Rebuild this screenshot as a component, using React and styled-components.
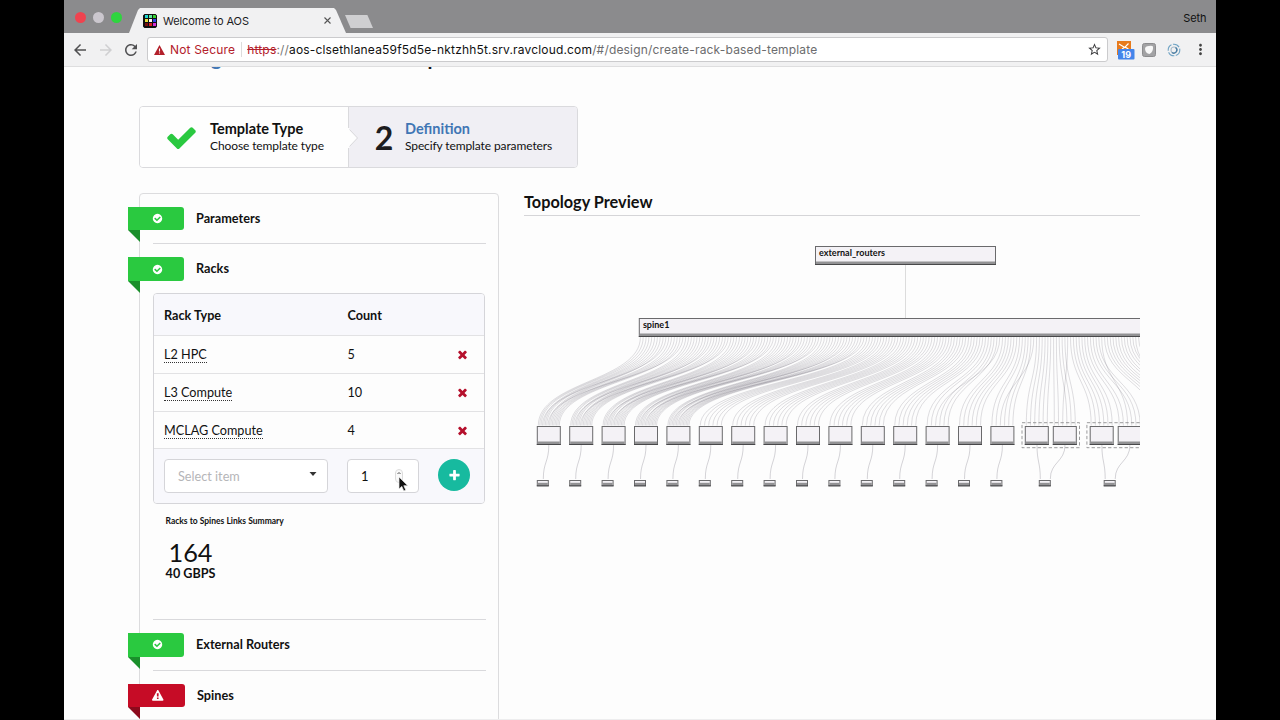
import React from 'react';
import styled, { createGlobalStyle } from 'styled-components';
import { MdArrowBack, MdArrowForward, MdRefresh, MdStarBorder, MdMoreVert } from 'react-icons/md';

const GlobalStyle = createGlobalStyle`
  * { box-sizing: border-box; }
  body {
    margin: 0;
    background: #000;
    color: #111;
    font-family: Lato, "Liberation Sans", sans-serif;
    font-size: 13px;
    overflow: hidden;
  }
`;

const ICONS = {
    check: 'M1671 566q0 40-28 68l-724 724-136 136q-28 28-68 28t-68-28l-136-136-362-362q-28-28-28-68t28-68l136-136q28-28 68-28t68 28l294 295 656-657q28-28 68-28t68 28l136 136q28 28 28 68z',
    remove: 'M1490 1322q0 40-28 68l-136 136q-28 28-68 28t-68-28l-294-294-294 294q-28 28-68 28t-68-28l-136-136q-28-28-28-68t28-68l294-294-294-294q-28-28-28-68t28-68l136-136q28-28 68-28t68 28l294 294 294-294q28-28 68-28t68 28l136 136q28 28 28 68t-28 68l-294 294 294 294q28 28 28 68z',
    plus: 'M1600 736v192q0 40-28 68t-68 28h-416v416q0 40-28 68t-68 28h-192q-40 0-68-28t-28-68v-416h-416q-40 0-68-28t-28-68v-192q0-40 28-68t68-28h416v-416q0-40 28-68t68-28h192q40 0 68 28t28 68v416h416q40 0 68 28t28 68z',
    ok: 'M1412 734q0-28-18-46l-91-90q-19-19-45-19t-45 19l-408 407-226-226q-19-19-45-19t-45 19l-91 90q-18 18-18 46 0 27 18 45l362 362q19 19 45 19 27 0 46-19l543-543q18-18 18-45zm252 162q0 209-103 385.5t-279.5 279.5-385.5 103-385.5-103-279.5-279.5-103-385.5 103-385.5 279.5-279.5 385.5-103 385.5 103 279.5 279.5 103 385.5z',
    warning: 'M1024 1375v-190q0-14-9.5-23.5t-22.5-9.5h-192q-13 0-22.5 9.5t-9.5 23.5v190q0 14 9.5 23.5t22.5 9.5h192q13 0 22.5-9.5t9.5-23.5zm-2-374l18-459q0-12-10-19-13-11-24-11h-220q-11 0-24 11-10 7-10 21l17 457q0 10 10 16.5t24 6.5h185q14 0 23.5-6.5t10.5-16.5zm-14-934l768 1408q35 63-2 126-17 29-46.5 46t-63.5 17h-1536q-34 0-63.5-17t-46.5-46q-37-63-2-126l768-1408q17-31 47-49t65-18 65 18 47 49z',
};

const Icon = ({name, size, color}) => (
    <svg width={size} height={size} viewBox="0 0 1792 1792" fill={color || 'currentColor'}>
        <path d={ICONS[name]}/>
    </svg>
);

const racks = [
    {name: 'L2 HPC', count: 5},
    {name: 'L3 Compute', count: 10},
    {name: 'MCLAG Compute', count: 4},
];

/* ---- topology ---- */

const LEAF_W = 23;
const LEAF_TOP = 191.5;
const SPINE_X = 115;
const PORT_STEP = 532 / 188;

const leaves = [];
const servers = [];
const pairs = [];
for (let i = 0; i < 15; i++) {
    const x = 13.3 + i * 32.4;
    leaves.push({x, ports: i < 5 ? 16 : 6});
    servers.push({x, from: [x + 11.5], to: [x + 6]});
}
for (let i = 0; i < 4; i++) {
    const x = 501.3 + i * 64.9;
    leaves.push({x, ports: 6}, {x: x + 28, ports: 6});
    pairs.push(x - 3.3);
    servers.push({x: x + 14, from: [x + 11.7, x + 39.7], to: [x + 15, x + 25]});
}

// a few ports are wired out of order, so some links cross
const portOrder = (n, leaf) => {
    const order = Array.from({length: n}, (_, i) => i);
    if (n === 16) {
        order.splice(15, 0, order.splice(7, 1)[0]);
        order.splice(9, 0, order.splice(3, 1)[0]);
    } else if (leaf > 11 && leaf % 2 === 0) {
        order.splice(5, 0, order.splice(2, 1)[0]);
    }
    return order;
};

const curve = (x1, y1, x2, y2) => {
    const mid = (y1 + y2) / 2;
    return `M${x1.toFixed(1)} ${y1}C${x1.toFixed(1)} ${mid} ${x2.toFixed(1)} ${mid} ${x2.toFixed(1)} ${y2}`;
};

const links = [];
let port = 0;
leaves.forEach(({x, ports}, leaf) => {
    portOrder(ports, leaf).forEach((p, i) => {
        links.push(curve(
            SPINE_X + (port + i + 0.5) * PORT_STEP, 103,
            x + 1 + p * (LEAF_W - 2) / (ports - 1), LEAF_TOP
        ));
    });
    port += ports;
});

const Node = ({x, y, w, h, strip = 3, label}) => (
    <g>
        <rect x={x} y={y} width={w} height={h} fill="#f4f2f6" stroke="#6a6a6c"/>
        <rect x={x + 0.5} y={y + h - strip} width={w - 1} height={strip} fill="#929294"/>
        <path d={`M${x - 0.5} ${y + h}h${w + 1}`} stroke="#48484a"/>
        {label && <NodeLabel x={x + 3.6} y={y + 9.7}>{label}</NodeLabel>}
    </g>
);

const Topology = () => (
    <Canvas width="616" height="270" viewBox="0 0 616 270">
        <g fill="none" stroke="#2b2438" strokeOpacity="0.17" strokeWidth="0.9">
            <path d="M381.500 31V84" stroke="#222"/>
            {links.map((d) => <path key={d} d={d}/>)}
            {servers.map((s) => s.from.map((x, i) => (
                <path key={x} d={curve(x, 211, s.to[i], 245)} strokeOpacity="0.22"/>
            )))}
        </g>
        <Node x={291.5} y={12.5} w={180} h={18} label="external_routers"/>
        <Node x={115.3} y={84.5} w={532} h={18} label="spine1"/>
        {pairs.map((x) => (
            <rect key={x} x={x} y={188.7} width={57.5} height={25} fill="none" stroke="#8f8f91" strokeWidth="0.9" strokeDasharray="3.3 2.2"/>
        ))}
        {leaves.map((l) => <Node key={l.x} x={l.x} y={192.5} w={LEAF_W} h={18}/>)}
        {servers.map((s) => <Node key={s.x} x={s.x} y={246.5} w={11} h={5.3}/>)}
    </Canvas>
);

const Section = ({title, status = 'ok', children}) => (
    <SectionBox>
        <SectionHead>
            <Ribbon $status={status}>
                <Icon name={status} size={status === 'ok' ? 11 : 11.5} color="#fff"/>
            </Ribbon>
            <SectionTitle>{title}</SectionTitle>
        </SectionHead>
        {children}
    </SectionBox>
);

const Browser = () => (
    <>
        <TabStrip>
            <Lights>
                <Light $color="#f0434f"/>
                <Light $color="#cbc7ce"/>
                <Light $color="#2fd53f"/>
            </Lights>
            <Tab>
                <Favicon/>
                <TabTitle>Welcome to AOS</TabTitle>
                <svg width="7" height="7" viewBox="0 0 7 7" stroke="#555" strokeWidth="1.1"><path d="M.5 .5l6 6M6.5 .5l-6 6"/></svg>
            </Tab>
            <NewTab/>
            <Profile>Seth</Profile>
        </TabStrip>
        <Toolbar>
            <NavIcons>
                <MdArrowBack size={18} color="#505052"/>
                <MdArrowForward size={18} color="#cfcfd1"/>
                <MdRefresh size={18} color="#505052"/>
            </NavIcons>
            <AddressBar>
                <svg width="11" height="10" viewBox="0 0 11 10">
                    <path d="M5.5 0L11 10H0z" fill="#b3202b"/>
                    <path d="M5.5 3.4v3M5.5 7.4v1.2" stroke="#fff" strokeWidth="1.1"/>
                </svg>
                <NotSecure>Not Secure</NotSecure>
                <Url><s>https</s><i>://</i>aos-clsethlanea59f5d5e-nktzhh5t.srv.ravcloud.com<em>/#/design/create-rack-based-template</em></Url>
                <MdStarBorder size={15} color="#3c3c3e"/>
            </AddressBar>
            <Extensions>
                <svg width="18" height="20" viewBox="0 0 18 20">
                    <rect x="0" y="1" width="14" height="14" fill="#e77a1c"/>
                    <path d="M2 4l5 3M11.500 3.500L8 7l3.500 2M8 7l-3 2" stroke="#fff" strokeWidth="1.2" fill="none"/>
                    <rect x="1" y="9" width="16.5" height="10.5" rx="1" fill="#4485ea"/>
                    <BadgeText x="9.2" y="17.6" textAnchor="middle">19</BadgeText>
                </svg>
                <svg width="14" height="14" viewBox="0 0 14 14">
                    <rect x="0.5" y="0.5" width="13" height="13" rx="2" fill="#a2a2a4" stroke="#8c8c8e"/>
                    <path d="M3 6Q3 3 7 3Q10 2.500 11 3.500Q11.500 9 7.500 11Q3.500 10.500 3 6z" fill="#f8f8f8"/>
                </svg>
                <svg width="14" height="14" viewBox="0 0 14 14" fill="none">
                    <circle cx="7" cy="7" r="5.8" stroke="#6fa3c4" strokeWidth="1.1" strokeDasharray="7 1.5"/>
                    <circle cx="7" cy="7" r="3" stroke="#a9bccb" strokeWidth="1.1"/>
                    <path d="M8.500 4.500a3 3 0 0 1-3.500 5" stroke="#4a7ea3" strokeWidth="1.3"/>
                </svg>
                <MdMoreVert size={17} color="#444"/>
            </Extensions>
        </Toolbar>
    </>
);

const App = () => (
    <Window>
        <GlobalStyle/>
        <Browser/>
        <Page>
            <Breadcrumb><b>g</b><span>p</span></Breadcrumb>
            <Steps>
                <Step $width="208px">
                    <StepMark $left="26px" $width="30px"><Icon name="check" size={33} color="#2ac940"/></StepMark>
                    <StepText $gap="14px">
                        <StepTitle>Template Type</StepTitle>
                        <StepInfo>Choose template type</StepInfo>
                    </StepText>
                    <StepArrow width="11" height="20" viewBox="0 0 11 20">
                        <path d="M0 0L9.500 10L0 20" fill="#fefefe" stroke="#d6d6d9"/>
                        <path d="M0 0V20" stroke="#fefefe" strokeWidth="3"/>
                    </StepArrow>
                </Step>
                <Step $width="229px" $active>
                    <StepMark $left="25px" $width="20px">2</StepMark>
                    <StepText $gap="11px">
                        <StepTitle $active>Definition</StepTitle>
                        <StepInfo>Specify template parameters</StepInfo>
                    </StepText>
                </Step>
            </Steps>
            <Columns>
                <Panel>
                    <Section title="Parameters"/>
                    <Section title="Racks">
                        <Table>
                            <HeadRow>
                                <span>Rack Type</span>
                                <span>Count</span>
                            </HeadRow>
                            {racks.map(({name, count}) => (
                                <Row key={name}>
                                    <span><RackName>{name}</RackName></span>
                                    <span>{count}</span>
                                    <Icon name="remove" size={13} color="#b5102c"/>
                                </Row>
                            ))}
                            <AddRow>
                                <Select>
                                    Select item
                                    <Caret width="8" height="4" viewBox="0 0 8 4"><path d="M.5 0h7L4 4z" fill="#333"/></Caret>
                                </Select>
                                <CountInput>
                                    1
                                    <Spinner width="8" height="14" viewBox="0 0 8 14">
                                        <rect x="0.5" y="0.5" width="7" height="13" rx="3.500" fill="#fafafa" stroke="#dcdcdc"/>
                                        <path d="M2.500 5L4 3.500L5.500 5" fill="none" stroke="#555"/>
                                    </Spinner>
                                    <Cursor width="12" height="17" viewBox="0 0 12 17">
                                        <path d="M1 1v12l2.800-2.600 2 4.600 2-.9-2-4.400h4z" fill="#111" stroke="#eee" strokeWidth="0.7"/>
                                    </Cursor>
                                </CountInput>
                                <AddButton><Icon name="plus" size={13} color="#fff"/></AddButton>
                            </AddRow>
                        </Table>
                        <Summary>
                            <SummaryTitle>Racks to Spines Links Summary</SummaryTitle>
                            <Statistic>
                                <StatValue>164</StatValue>
                                <StatLabel>40 GBPS</StatLabel>
                            </Statistic>
                        </Summary>
                    </Section>
                    <Section title="External Routers"/>
                    <Section title="Spines" status="warning"/>
                </Panel>
                <Preview>
                    <PreviewTitle>Topology Preview</PreviewTitle>
                    <Topology/>
                </Preview>
            </Columns>
        </Page>
    </Window>
);

const Window = styled.div`
  width: 1152px;
  height: 720px;
  margin: 0 64px;
  background: #fdfdfd;
  overflow: hidden;
  display: flex;
  flex-direction: column;
`;

const TabStrip = styled.div`
  height: 33px;
  flex: none;
  display: flex;
  background: #8b8b8d;
  font-family: Inter, Roboto, sans-serif;
`;

const Lights = styled.div`
  display: flex;
  gap: 7px;
  padding: 11.500px 0 0 10.500px;
  width: 65px;
`;

const Light = styled.span`
  width: 11px;
  height: 11px;
  border-radius: 50%;
  background: ${({$color}) => $color};
`;

const Tab = styled.div`
  width: 217px;
  height: 25px;
  margin-top: 8px;
  padding: 0 15px 0 14px;
  display: flex;
  align-items: center;
  background: #f1f1f2;
  clip-path: polygon(0 100%, 9px 2px, 11px 0, 205px 0, 207px 2px, 100% 100%);
`;

const Favicon = styled.span`
  width: 14px;
  height: 14px;
  border-radius: 2px;
  border: 1px solid #111;
  background:
    linear-gradient(#1fd6d0, #1fd6d0) 1px 0 / 3px 3px,
    linear-gradient(#5fe6a0, #5fe6a0) 5px 0 / 3px 3px,
    linear-gradient(#38d530, #38d530) 9px 0 / 3px 3px,
    linear-gradient(#e8e13a, #e8e13a) 1px 4px / 3px 3px,
    linear-gradient(#fff, #fff) 5px 4px / 3px 3px,
    linear-gradient(#2f44e8, #2f44e8) 9px 4px / 3px 3px,
    linear-gradient(#7a1010, #7a1010) 1px 8px / 3px 3px,
    linear-gradient(#d62020, #d62020) 5px 8px / 3px 3px,
    linear-gradient(#d42ed8, #d42ed8) 9px 8px / 3px 3px,
    #111;
  background-repeat: no-repeat;
`;

const TabTitle = styled.span`
  flex: 1;
  padding-left: 6px;
  font-size: 11px;
  letter-spacing: -0.1px;
  color: #1c1c1e;
`;

const NewTab = styled.span`
  width: 28px;
  height: 13px;
  margin: 15px 0 0 -1px;
  background: #cfcfd1;
  clip-path: polygon(0 0, 80% 0, 100% 100%, 20% 100%);
`;

const Profile = styled.span`
  margin-left: auto;
  padding: 11px 9.500px 0 0;
  font-size: 11px;
  letter-spacing: -0.1px;
  color: #111;
`;

const Toolbar = styled.div`
  height: 34px;
  flex: none;
  display: flex;
  align-items: center;
  background: #f1f1f2;
  border-bottom: 1px solid #dededf;
  font-family: Inter, Roboto, sans-serif;
`;

const NavIcons = styled.div`
  width: 83px;
  padding-left: 7px;
  display: flex;
  gap: 7.500px;
`;

const AddressBar = styled.div`
  width: 961px;
  height: 25px;
  padding: 0 5px 0 6px;
  display: flex;
  align-items: center;
  background: #fff;
  border: 1px solid #cbcbcd;
  border-radius: 3px;
  font-size: 12px;
  letter-spacing: 0.17px;
  white-space: nowrap;
`;

const NotSecure = styled.span`
  margin: 0 5px 0 5px;
  padding-right: 6px;
  color: #b3202b;
  border-right: 1px solid #dcdcdc;
`;

const Url = styled.span`
  flex: 1;
  color: #111;
  s { color: #b3202b; }
  i { font-style: normal; color: #777; }
  em { font-style: normal; color: #6c6c6e; }
`;

const Extensions = styled.div`
  display: flex;
  align-items: center;
  gap: 10.800px;
  padding-left: 9px;
  svg:first-child { margin-right: -3.500px; }
`;

const BadgeText = styled.text`
  font: 700 9px Inter, sans-serif;
  fill: #fff;
`;

const Page = styled.div`
  flex: 1;
  min-height: 0;
  padding-left: 75px;
  overflow: hidden;
  border-bottom: 1px solid #ededee;
`;

const Breadcrumb = styled.div`
  height: 39px;
  display: flex;
  gap: 206px;
  padding-left: 72px;
  overflow: hidden;
  font-size: 20px;
  line-height: 22px;
  b, span { margin-top: -21px; font-weight: 700; }
  b { color: #4076b4; }
`;

const Steps = styled.div`
  width: 439px;
  height: 62px;
  display: flex;
  border: 1px solid #dadadd;
  border-radius: 4px;
  overflow: hidden;
`;

const Step = styled.div`
  position: relative;
  flex: none;
  width: ${({$width}) => $width};
  display: flex;
  align-items: center;
  background: ${({$active}) => ($active ? '#f0eff4' : '#fefefe')};
  border-left: ${({$active}) => ($active ? '1px solid #dadadd' : 'none')};
`;

const StepMark = styled.div`
  width: ${({$width}) => $width};
  margin-left: ${({$left}) => $left};
  display: flex;
  justify-content: center;
  flex: none;
  font-size: 32px;
  font-weight: 700;
  color: #1c1c1e;
  svg { flex: none; }
`;

const StepText = styled.div`
  margin-left: ${({$gap}) => $gap};
`;

const StepTitle = styled.div`
  font-size: 14.500px;
  line-height: 18px;
  font-weight: 700;
  color: ${({$active}) => ($active ? '#4076b4' : '#111')};
`;

const StepInfo = styled.div`
  font-size: 12px;
  letter-spacing: -0.110px;
  line-height: 16px;
`;

const StepArrow = styled.svg`
  position: absolute;
  right: -11px;
  top: 21px;
  z-index: 1;
`;

const Columns = styled.div`
  display: flex;
  margin-top: 25px;
`;

const Panel = styled.div`
  width: 360px;
  height: 540px;
  margin-left: 0.400px;
  border: 1px solid #dcdcde;
  border-radius: 4px;
  padding: 0 12.500px 0 12.600px;
  flex: none;
`;

const SectionBox = styled.div`
  padding: 12.800px 0 12px;
  border-bottom: 1px solid #d9d9dc;
`;

const SectionHead = styled.div`
  display: flex;
  height: 24.700px;
`;

const RIBBON = {
    ok: {width: '56px', color: '#2ac940', fold: '#1a8f2b'},
    warning: {width: '57px', color: '#c60c26', fold: '#8c0a1c'},
};

const Ribbon = styled.div`
  position: relative;
  width: ${({$status}) => RIBBON[$status].width};
  height: 23.500px;
  margin-left: -25px;
  padding-left: 3px;
  display: flex;
  align-items: center;
  justify-content: center;
  background: ${({$status}) => RIBBON[$status].color};
  border-radius: 0 3px 3px 0;
  &::after {
    content: '';
    position: absolute;
    left: 0;
    top: 100%;
    border-style: solid;
    border-width: 0 12px 12px 0;
    border-color: transparent ${({$status}) => RIBBON[$status].fold} transparent transparent;
  }
`;

const SectionTitle = styled.div`
  margin-left: 12px;
  font-size: 12.700px;
  line-height: 22px;
  font-weight: 700;
`;

const Table = styled.div`
  width: 332px;
  margin-top: 11.500px;
  border: 1px solid #d5d5d9;
  border-radius: 4px;
  overflow: hidden;
`;

const Row = styled.div`
  display: grid;
  grid-template-columns: 183.500px 109px 1fr;
  align-items: center;
  height: 37.700px;
  padding: 0.600px 0 0 10px;
  border-bottom: 1px solid #e2e2e4;
  font-size: 12.650px;
`;

const HeadRow = styled(Row)`
  height: 41.800px;
  padding-top: 0.800px;
  background: #f8f8fc;
  font-weight: 700;
`;

const RackName = styled.span`
  border-bottom: 1px dotted #333;
`;

const AddRow = styled.div`
  display: flex;
  height: 54px;
  padding: 10px 0 0 10px;
  background: #f8f8fc;
`;

const Select = styled.div`
  width: 164px;
  height: 34px;
  padding: 0 10px 0 13px;
  display: flex;
  align-items: center;
  justify-content: space-between;
  background: #fff;
  border: 1px solid #d5d5d9;
  border-radius: 4px;
  font-size: 12.700px;
  color: #b5b5b8;
`;

const Caret = styled.svg`
  margin-bottom: 4px;
`;

const CountInput = styled.div`
  position: relative;
  width: 72px;
  height: 34px;
  margin-left: 19px;
  padding: 0 15px 0 13px;
  display: flex;
  align-items: center;
  justify-content: space-between;
  background: #fff;
  border: 1px solid #d5d5d9;
  border-radius: 4px;
`;

const Spinner = styled.svg`
  flex: none;
`;

const Cursor = styled.svg`
  position: absolute;
  left: 50px;
  top: 16px;
`;

const AddButton = styled.div`
  width: 32px;
  height: 32px;
  margin-left: 19.500px;
  display: flex;
  align-items: center;
  justify-content: center;
  border-radius: 50%;
  background: #17ba9f;
`;

const Summary = styled.div`
  height: 103px;
  padding: 11px 0 0 12.500px;
`;

const SummaryTitle = styled.div`
  font-size: 8.500px;
  line-height: 13px;
  font-weight: 700;
`;

const Statistic = styled.div`
  width: 50px;
  margin-top: 9.500px;
  text-align: center;
  white-space: nowrap;
`;

const StatValue = styled.div`
  font-size: 25.300px;
  line-height: 28px;
`;

const StatLabel = styled.div`
  font-size: 12.600px;
  line-height: 15px;
  font-weight: 700;
`;

const Preview = styled.div`
  width: 616px;
  margin-left: 24.600px;
`;

const PreviewTitle = styled.div`
  height: 23px;
  font-size: 16.300px;
  line-height: 18px;
  font-weight: 700;
  border-bottom: 1px solid #d5d5d8;
`;

const Canvas = styled.svg`
  display: block;
  margin-top: 18px;
`;

const NodeLabel = styled.text`
  font: 700 9px Lato, sans-serif;
  fill: #111;
`;

export default App;
